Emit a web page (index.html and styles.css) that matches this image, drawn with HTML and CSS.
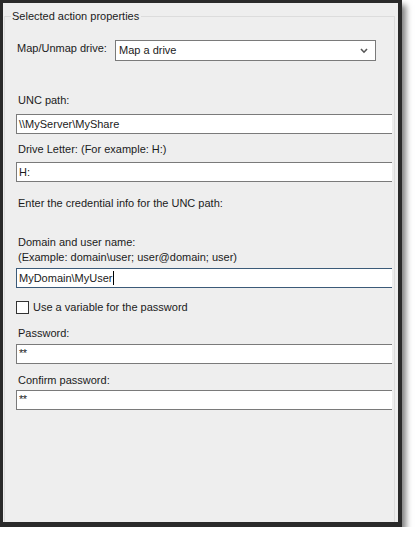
FILE: index.html
```html
<!DOCTYPE html>
<html>
<head>
<meta charset="utf-8">
<link rel="stylesheet" href="styles.css">
</head>
<body>
<div class="frame">
  <div class="group">
    <div class="legend">Selected action properties</div>

    <div class="row-select">
      <div class="label-inline">Map/Unmap drive:</div>
      <div class="select">
        <span class="select-text">Map a drive</span>
        <svg class="chevron" width="8" height="6" viewBox="0 0 8 6"><path d="M1 1 L4 4.2 L7 1" fill="none" stroke="#555" stroke-width="1.6"/></svg>
      </div>
    </div>

    <div class="label m-unc">UNC path:</div>
    <div class="field m7">\\MyServer\MyShare</div>

    <div class="label m9">Drive Letter: (For example: H:)</div>
    <div class="field m6">H:</div>

    <div class="label m15">Enter the credential info for the UNC path:</div>

    <div class="label m26">Domain and user name:</div>
    <div class="label m2">(Example: domain\user; user@domain; user)</div>
    <div class="field focused m4">MyDomain\MyUser<span class="caret"></span></div>

    <div class="check-row">
      <span class="checkbox"></span>
      <span class="check-label">Use a variable for the password</span>
    </div>

    <div class="label m13">Password:</div>
    <div class="field pw m4">**</div>

    <div class="label m10">Confirm password:</div>
    <div class="field pw m3">**</div>
  </div>
</div>
</body>
</html>
```

FILE: styles.css
```css
html, body {
  margin: 0;
  padding: 0;
  background: #ffffff;
}

body {
  font-family: "Liberation Sans", Arial, sans-serif;
  font-size: 11px;
  color: #1b1b1b;
}

.frame {
  box-sizing: border-box;
  width: 402px;
  height: 527px;
  background: #eeeeee;
  border-style: solid;
  border-color: #2a2a2a;
  border-width: 3px 4px 5px 3px;
  box-shadow: 4px 5px 6px rgba(0, 0, 0, 0.5);
  overflow: hidden;
}

.group {
  margin: 13px 3px 0 1px;
  border: 1px solid #dcdcdc;
  border-bottom: none;
  height: 520px;
}

.legend {
  display: table;
  margin: -7px 0 0 6px;
  padding: 0 2px 0 1px;
  background: #eeeeee;
  line-height: 13px;
}

.row-select {
  display: flex;
  align-items: flex-start;
  margin-top: 17px;
  padding-left: 12px;
}

.label-inline {
  width: 98px;
  margin-top: 2px;
  line-height: 13px;
}

.select {
  box-sizing: border-box;
  width: 261px;
  height: 21px;
  background: #ffffff;
  border: 1px solid #7a7a7a;
  display: flex;
  align-items: center;
  justify-content: space-between;
  padding: 0 7px 0 3px;
}

.select-text {
  line-height: 13px;
}

.label {
  line-height: 13px;
  padding-left: 13px;
}

.field {
  box-sizing: border-box;
  height: 20px;
  margin: 0 2px 0 11px;
  background: #ffffff;
  border: 1px solid #7a7a7a;
  border-right: none;
  padding: 0 0 0 2px;
  line-height: 18px;
  display: flex;
  align-items: center;
}

.field.focused {
  border-color: #3b5a78;
}

.caret {
  display: inline-block;
  width: 1px;
  height: 14px;
  background: #000;
}

.field.pw {
  align-items: flex-start;
  line-height: 16px;
  letter-spacing: -0.5px;
}

.check-row {
  display: flex;
  align-items: center;
  margin-top: 13px;
  padding-left: 11px;
  line-height: 13px;
}

.checkbox {
  box-sizing: border-box;
  width: 13px;
  height: 13px;
  border: 1px solid #333333;
  background: #ffffff;
  margin-right: 4px;
}

.m-unc { margin-top: 33px; }
.m2 { margin-top: 2px; }
.m3 { margin-top: 3px; }
.m4 { margin-top: 4px; }
.m6 { margin-top: 6px; }
.m7 { margin-top: 7px; }
.m9 { margin-top: 9px; }
.m10 { margin-top: 10px; }
.m13 { margin-top: 13px; }
.m15 { margin-top: 15px; }
.m26 { margin-top: 26px; }
```
